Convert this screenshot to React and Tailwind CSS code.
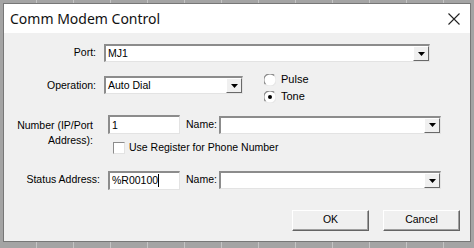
import React from "react";

const font = { fontFamily: '"Liberation Sans", Arial, sans-serif' };

function Arrow() {
  return (
    <div className="w-[16px] h-full flex items-center justify-center bg-[#f0f0f0] border-t border-l border-t-[#fff] border-l-[#fff] border-b border-r border-b-[#696969] border-r-[#696969]">
      <svg width="7" height="4" viewBox="0 0 7 4">
        <path d="M0 0h7L3.5 4z" fill="#000" />
      </svg>
    </div>
  );
}

function Select({ w, value }) {
  return (
    <div
      className={`${w} h-[18px] flex bg-white border-t-2 border-l-2 border-t-[#8c8c8c] border-l-[#8c8c8c] border-b border-r border-b-[#e3e3e3] border-r-[#e3e3e3]`}
    >
      <div className="flex-1 pl-[2px] leading-[15px] text-black">{value}</div>
      <Arrow />
    </div>
  );
}

function Input({ value, cursor }) {
  return (
    <div className="w-[72px] h-[19px] flex items-center bg-white border-t-2 border-l-2 border-t-[#8c8c8c] border-l-[#8c8c8c] border-b border-r border-b-[#e3e3e3] border-r-[#e3e3e3] pl-[2px]">
      <span className="leading-[15px]">{value}</span>
      {cursor && <span className="w-px h-[13px] bg-black" />}
    </div>
  );
}

function Radio({ checked, label }) {
  return (
    <div className="flex items-center gap-[5px] h-[17px]">
      <svg width="12" height="12" viewBox="0 0 12 12">
        <circle cx="6" cy="6" r="5.5" fill="#fff" />
        <path d="M1.6 10.4A5.5 5.5 0 0 1 10.4 1.6" stroke="#8a8a8a" strokeWidth="1.2" fill="none" />
        <path d="M10.4 1.6A5.5 5.5 0 0 1 1.6 10.4" stroke="#e8e8e8" strokeWidth="1.2" fill="none" />
        {checked && <circle cx="6" cy="6" r="2" fill="#000" />}
      </svg>
      <span className="text-[11px]">{label}</span>
    </div>
  );
}

function Button({ children }) {
  return (
    <div className="w-[77px] h-[21px] flex items-center justify-center bg-[#f0f0f0] border-t border-l border-t-[#fff] border-l-[#fff] border-b border-r border-b-[#646464] border-r-[#646464] shadow-[inset_-1px_-1px_#a0a0a0]">
      {children}
    </div>
  );
}

function NameField() {
  return (
    <>
      <span className="ml-[6px] w-[28px]">Name:</span>
      <div className="ml-[5px]">
        <Select w="w-[222px]" value="" />
      </div>
    </>
  );
}

export default function App() {
  return (
    <div
      className="w-[474px] h-[248px] p-[3px] pb-[6px] bg-[#a4a4a4] bg-[repeating-linear-gradient(90deg,transparent_0px,transparent_36px,#c4c4c4_36px,#c4c4c4_37px)]"
      style={font}
    >
      <div className="w-full h-full flex flex-col border border-[#777] bg-[#f0f0f0] text-[10.5px] text-black">
        {/* Title bar */}
        <div className="h-[29px] bg-white flex items-center justify-between pl-[6px] pr-[10px]">
          <span className="text-[14px] text-[#111]" style={{ fontFamily: '"Noto Sans", sans-serif' }}>
            Comm Modem Control
          </span>
          <svg width="12" height="12" viewBox="0 0 12 12">
            <path d="M0.5 0.5L11.5 11.5M11.5 0.5L0.5 11.5" stroke="#222" strokeWidth="1.1" />
          </svg>
        </div>

        {/* Body */}
        <div className="flex-1 flex flex-col pt-[11px]">
          <div className="flex items-center">
            <div className="w-[92px] text-right">Port:</div>
            <div className="ml-[8px]">
              <Select w="w-[326px]" value="MJ1" />
            </div>
          </div>

          <div className="flex items-start mt-[9px]">
            <div className="w-[92px] text-right mt-[7px]">Operation:</div>
            <div className="ml-[8px] mt-[5px]">
              <Select w="w-[139px]" value="Auto Dial" />
            </div>
            <div className="ml-[21px] flex flex-col">
              <Radio label="Pulse" />
              <Radio checked label="Tone" />
            </div>
          </div>

          <div className="flex items-start mt-[10px]">
            <div className="w-[89px] text-right leading-[15px] mt-[3px]">
              Number (IP/Port
              <br />
              Address):
            </div>
            <div className="ml-[15px] flex flex-col">
              <div className="flex items-center">
                <Input value="1" />
                <NameField />
              </div>
              <div className="flex items-center mt-[6px] ml-[5px]">
                <div className="w-[12px] h-[12px] bg-white border-t border-l border-t-[#8c8c8c] border-l-[#8c8c8c] border-b border-r border-b-[#e3e3e3] border-r-[#e3e3e3]" />
                <span className="ml-[4px]">Use Register for Phone Number</span>
              </div>
            </div>
          </div>

          <div className="flex items-center mt-[15px]">
            <div className="w-[96px] text-right">Status Address:</div>
            <div className="ml-[8px] flex items-center">
              <Input value="%R00100" cursor />
              <NameField />
            </div>
          </div>

          <div className="flex justify-end gap-[14px] mt-[20px] pr-[10px]">
            <Button>OK</Button>
            <Button>Cancel</Button>
          </div>
        </div>
      </div>
    </div>
  );
}
